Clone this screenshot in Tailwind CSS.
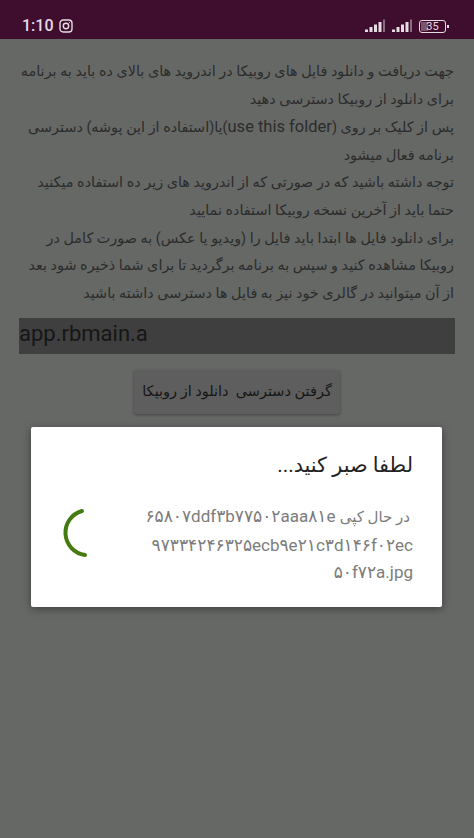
<!DOCTYPE html>
<html lang="fa">
<head>
    <meta charset="UTF-8">
    <meta name="viewport" content="width=device-width, initial-scale=1.0">
    <title>Rubika</title>
    <script src="https://cdn.jsdelivr.net/npm/@tailwindcss/browser@4"></script>
</head>
<body class="relative h-[838px] w-[474px] overflow-hidden bg-[#666866] font-['Roboto','DejaVu_Sans',sans-serif]">
    <!-- Status bar -->
    <div class="flex h-[39px] items-center bg-[#3f0d2e] pl-[22px] pr-[28px] pt-[13px] text-[#e6dde3]">
        <span class="text-[16px] font-medium leading-none">1:10</span>
        <svg class="ml-[5px]" width="14" height="14" viewBox="0 0 14 14" fill="none" stroke="currentColor" stroke-width="1.4">
            <rect x="1" y="1" width="12" height="12" rx="3.2"/>
            <circle cx="7" cy="7" r="2.7"/>
            <circle cx="10.4" cy="3.6" r=".6" fill="currentColor" stroke="none"/>
        </svg>
        <div class="ml-auto flex items-center">
            <svg width="20" height="14" viewBox="0 0 20 14" fill="currentColor">
                <rect x="0" y="10.5" width="3" height="2.5"/><rect x="4.5" y="8" width="3" height="5"/><rect x="9" y="5.5" width="3" height="7.5"/><rect x="13.5" y="3" width="3" height="10"/><rect x="18" y="0.5" width="2" height="12.5" fill-opacity=".45"/>
            </svg>
            <svg class="ml-[7px]" width="20" height="14" viewBox="0 0 20 14" fill="currentColor">
                <rect x="0" y="10.5" width="3" height="2.5"/><rect x="4.5" y="8" width="3" height="5"/><rect x="9" y="5.5" width="3" height="7.5"/><rect x="13.5" y="3" width="3" height="10"/><rect x="18" y="0.5" width="2" height="12.5" fill-opacity=".45"/>
            </svg>
            <div class="relative ml-[7px] flex h-[13px] w-[27px] items-center justify-center rounded-[3px] border border-current text-[11px] leading-none">
                <span class="absolute inset-y-[1px] left-[1px] w-[7px] bg-white/30"></span>
                <span class="relative">35</span>
                <span class="absolute right-[-4px] h-[3px] w-[2px] bg-current"></span>
            </div>
        </div>
    </div>

    <!-- Page content (dimmed behind the dialog) -->
    <div dir="rtl" class="px-[19px] pt-[19px] text-[#2c2c2c]">
        <div class="whitespace-nowrap pr-[1px] text-[14.4px] leading-[27.6px]">
            <div>جهت دریافت و دانلود فایل های روبیکا در اندروید های بالای ده باید به برنامه</div>
            <div>برای دانلود از روبیکا دسترسی دهید</div>
            <div>پس از کلیک بر روی (<span class="text-[16.5px]">use this folder</span>)یا(استفاده از این پوشه) دسترسی</div>
            <div>برنامه فعال میشود</div>
            <div>توجه داشته باشید که در صورتی که از اندروید های زیر ده استفاده میکنید</div>
            <div>حتما باید از آخرین نسخه روبیکا استفاده نمایید</div>
            <div>برای دانلود فایل ها ابتدا باید فایل را (ویدیو یا عکس) به صورت کامل در</div>
            <div>روبیکا مشاهده کنید و سپس به برنامه برگردید تا برای شما ذخیره شود بعد</div>
            <div>از آن میتوانید در گالری خود نیز به فایل ها دسترسی داشته باشید</div>
        </div>
        <div dir="ltr" class="mt-[11px] h-[36px] bg-[#3f3f3f] text-[22px] leading-[31px] text-[#161616]">app.rbmain.a</div>
        <div class="mt-[16px] flex justify-center">
            <div class="flex h-[44px] w-[206px] items-center justify-center rounded-[2px] bg-[#5e5e5e] text-[14.5px] text-[#161616] shadow-[0_1px_3px_rgba(0,0,0,.35)]">گرفتن دسترسی &nbsp;دانلود از روبیکا</div>
        </div>
    </div>

    <!-- Progress dialog -->
    <div class="absolute left-[31px] top-[427px] h-[180px] w-[411px] rounded-[2px] bg-white pr-[29px] shadow-[0_2px_8px_rgba(0,0,0,.4)]">
        <div dir="rtl" class="pt-[24px] text-[20.8px] leading-[28px] text-[#222]">لطفا صبر کنید...</div>
        <div class="mt-[24px] flex">
            <svg class="ml-[34px] mt-[5px] shrink-0 overflow-visible" width="48" height="50" viewBox="0 0 48 50" fill="none">
                <path d="M17 3 A22.5 22.5 0 0 0 20 47" stroke="#457a10" stroke-width="4" stroke-linecap="round"/>
            </svg>
            <div class="ml-auto text-right text-[17px] leading-[27.5px] text-[#7c7c7c]">
                <div dir="rtl" class="pr-[3px]"><span class="text-[15px]">در حال کپی</span> <span dir="ltr">۶۵۸۰۷ddf۳b۷۷۵۰۲aaa۸۱e</span></div>
                <div dir="ltr">۹۷۳۳۴۲۴۶۳۲۵ecb۹e۲۱c۳d۱۴۶f۰۲ec</div>
                <div dir="ltr">۵۰f۷۲a.jpg</div>
            </div>
        </div>
    </div>
</body>
</html>
